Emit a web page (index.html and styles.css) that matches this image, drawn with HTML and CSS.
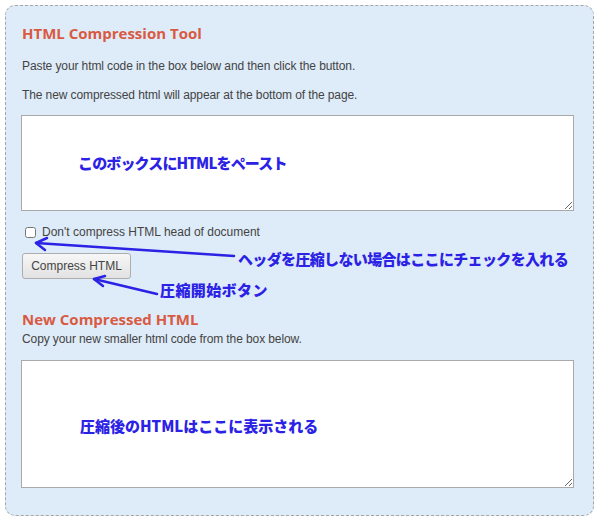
FILE: index.html
```html
<!DOCTYPE html>
<html lang="ja">
<head>
    <meta charset="UTF-8">
    <title>HTML Compression Tool</title>
    <link rel="stylesheet" href="styles.css">
</head>
<body>

    <div class="page">
        <div class="panel">
            <h1>HTML Compression Tool</h1>
            <p class="intro">Paste your html code in the box below and then click the button.</p>
            <p class="intro second">The new compressed html will appear at the bottom of the page.</p>

            <!-- Input box -->
            <textarea class="code-box input-box">このボックスにHTMLをペースト</textarea>

            <div class="check-row">
                <input type="checkbox" id="keepHead">
                <label for="keepHead">Don't compress HTML head of document</label>
            </div>

            <button type="button" class="compress-btn">Compress HTML</button>

            <h2>New Compressed HTML</h2>
            <p class="copy-note">Copy your new smaller html code from the box below.</p>

            <!-- Output box -->
            <textarea class="code-box output-box">圧縮後のHTMLはここに表示される</textarea>
        </div>

        <!-- Annotations drawn on top -->
        <svg class="arrows" width="600" height="522" viewBox="0 0 600 522">
            <g stroke="#2b22e6" stroke-width="2.5" fill="none" stroke-linecap="round" stroke-linejoin="round">
                <path d="M234 251 L36 238"/>
                <path d="M47 233 L36 238 L45 245"/>
                <path d="M157 289 L94 274"/>
                <path d="M105 271 L94 274 L103 281"/>
            </g>
        </svg>
        <div class="note note-check">ヘッダを圧縮しない場合はここにチェックを入れる</div>
        <div class="note note-button">圧縮開始ボタン</div>
    </div>

</body>
</html>
```

FILE: styles.css
```css
body {
    margin: 0;
    padding: 0;
    background-color: #ffffff;
    font-family: "Liberation Sans", Arial, sans-serif;
}
.page {
    position: relative;
    width: 600px;
    height: 522px;
}
.panel {
    margin: 5px;
    width: 589px;
    height: 511px;
    box-sizing: border-box;
    padding: 17px 19px 0 16px;
    background-color: #deebf8;
    border: 1px dashed #a6a6a6;
    border-radius: 10px;
}
h1, h2 {
    margin: 0;
    font-family: "Open Sans", "DejaVu Sans", sans-serif;
    font-weight: 700;
    font-size: 15px;
    line-height: 20px;
    color: #d95a42;
}
h2 {
    margin-top: 30px;
}
.intro, .copy-note {
    margin: 15px 0 0;
    font-size: 12px;
    line-height: 16px;
    letter-spacing: -0.1px;
    color: #444;
}
.intro.second {
    margin-top: 13px;
}
.copy-note {
    margin-top: 2px;
}
.code-box {
    display: block;
    width: 553px;
    margin: 12px 0 0 -1px;
    box-sizing: border-box;
    border: 1px solid #a9a9a9;
    background-color: #fff;
    padding: 37px 10px 0 56px;
    font-family: "Noto Sans CJK JP", sans-serif;
    font-weight: 900;
    font-size: 15px;
    line-height: 20px;
    letter-spacing: -0.85px;
    color: #2b22e6;
    outline: none;
}
.input-box {
    height: 96px;
}
.output-box {
    height: 128px;
    margin-top: 13px;
    padding-top: 55px;
    padding-left: 58px;
    letter-spacing: 0;
}
.check-row {
    display: flex;
    align-items: center;
    margin-top: 13px;
    height: 16px;
    font-size: 12px;
    color: #444;
}
.check-row input {
    margin: 0 6px 0 3px;
    width: 11px;
    height: 11px;
}
.compress-btn {
    display: block;
    margin-top: 13px;
    width: 109px;
    height: 26px;
    padding: 0;
    font-family: "Liberation Sans", Arial, sans-serif;
    font-size: 12px;
    color: #444;
    background: linear-gradient(#f7f7f7, #e2e2e2);
    border: 1px solid #adadad;
    border-radius: 3px;
}
.arrows {
    position: absolute;
    top: 0;
    left: 0;
    pointer-events: none;
}
.note {
    position: absolute;
    font-family: "Noto Sans CJK JP", sans-serif;
    font-weight: 900;
    font-size: 15px;
    line-height: 20px;
    color: #2b22e6;
    white-space: nowrap;
}
.note-check {
    left: 238px;
    top: 244px;
    letter-spacing: -0.65px;
}
.note-button {
    left: 160px;
    top: 275px;
    letter-spacing: 0.4px;
}
```
